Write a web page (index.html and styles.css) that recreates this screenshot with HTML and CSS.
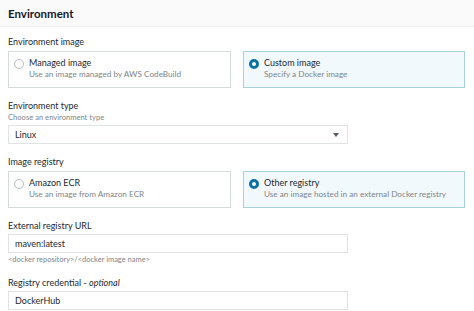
FILE: index.html
```html
<!DOCTYPE html>
<html lang="en">
<head>
    <meta charset="UTF-8">
    <meta name="viewport" content="width=device-width, initial-scale=1.0">
    <title>Environment</title>
    <link rel="stylesheet" href="styles.css">
</head>
<body>
    <div class="panel">
        <div class="panel-head">
            <h2>Environment</h2>
        </div>

        <div class="panel-body">
            <div class="field">
                <div class="label">Environment image</div>
                <div class="tiles">
                    <div class="tile">
                        <span class="radio"></span>
                        <div class="tile-text">
                            <div class="tile-title">Managed image</div>
                            <div class="tile-desc">Use an image managed by AWS CodeBuild</div>
                        </div>
                    </div>
                    <div class="tile selected">
                        <span class="radio"></span>
                        <div class="tile-text">
                            <div class="tile-title">Custom image</div>
                            <div class="tile-desc">Specify a Docker image</div>
                        </div>
                    </div>
                </div>
            </div>

            <div class="field">
                <div class="label">Environment type</div>
                <div class="hint">Choose an environment type</div>
                <div class="select">
                    <span>Linux</span>
                    <span class="caret"></span>
                </div>
            </div>

            <div class="field">
                <div class="label">Image registry</div>
                <div class="tiles">
                    <div class="tile">
                        <span class="radio"></span>
                        <div class="tile-text">
                            <div class="tile-title">Amazon ECR</div>
                            <div class="tile-desc">Use an image from Amazon ECR</div>
                        </div>
                    </div>
                    <div class="tile selected">
                        <span class="radio"></span>
                        <div class="tile-text">
                            <div class="tile-title">Other registry</div>
                            <div class="tile-desc">Use an image hosted in an external Docker registry</div>
                        </div>
                    </div>
                </div>
            </div>

            <div class="field">
                <div class="label">External registry URL</div>
                <div class="input">maven:latest</div>
                <div class="hint below">&lt;docker repository&gt;/&lt;docker image name&gt;</div>
            </div>

            <div class="field">
                <div class="label">Registry credential - <i>optional</i></div>
                <div class="input">DockerHub</div>
            </div>
        </div>
    </div>
</body>
</html>
```

FILE: styles.css
```css
body {
    font-family: Lato, "Liberation Sans", sans-serif;
    margin: 0;
    padding: 0;
    background-color: #ffffff;
    color: #232830;
    overflow: hidden;
}
.panel-head {
    height: 26px;
    background-color: #fafafa;
    border-bottom: 1px solid #eef0f0;
    display: flex;
    align-items: center;
    padding: 0 8px;
}
.panel-head h2 {
    margin: 0;
    font-size: 11.5px;
    font-weight: bold;
    color: #16191f;
}
.panel-body {
    padding: 9px 9px 0 8px;
}
.field {
    margin-bottom: 12px;
}
.label {
    font-size: 9px;
    line-height: 12px;
}
.hint {
    font-size: 7.6px;
    line-height: 11px;
    color: #7d858c;
}
.hint.below {
    margin-top: 2px;
    font-size: 7.5px;
    line-height: 10px;
}
.tiles {
    display: grid;
    grid-template-columns: 223px 222px;
    gap: 12px;
    margin-top: 3px;
}
.tile {
    display: flex;
    align-items: flex-start;
    gap: 5px;
    height: 35px;
    padding: 0 5px;
    border: 1px solid #d5dbdb;
    background-color: #ffffff;
}
.tile.selected {
    background-color: #f1f9fc;
    border-color: #a9d1dc;
}
.radio {
    flex: none;
    width: 8px;
    height: 8px;
    margin-top: 7px;
    border: 1px solid #b4bfc0;
    border-radius: 50%;
    background-color: #ffffff;
}
.tile.selected .radio {
    width: 4px;
    height: 4px;
    border: 3px solid #0b6fa8;
}
.tile-text {
    padding-top: 5px;
    white-space: nowrap;
}
.tile-title {
    font-size: 9px;
    line-height: 12px;
}
.tile-desc {
    font-size: 8.2px;
    line-height: 11px;
    color: #7d858c;
}
.select,
.input {
    width: 326px;
    height: 17px;
    margin-top: 2px;
    padding: 0 6px;
    border: 1px solid #dfe3e3;
    display: flex;
    align-items: center;
    justify-content: space-between;
    font-size: 9px;
}
.caret {
    width: 0;
    height: 0;
    margin-right: 2px;
    border-left: 3.5px solid transparent;
    border-right: 3.5px solid transparent;
    border-top: 4.5px solid #545b64;
}
```
